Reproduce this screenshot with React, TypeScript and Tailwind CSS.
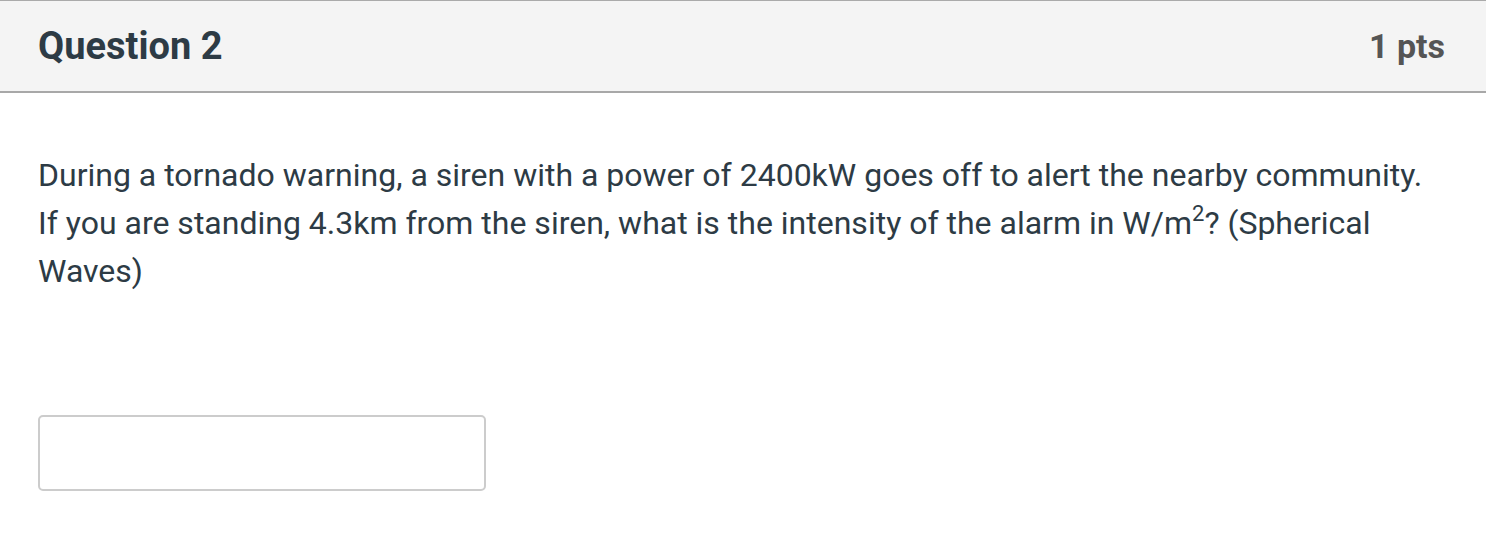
export default function App() {
  return (
    <div className="w-[1486px] h-[546px] bg-white font-['Roboto',sans-serif] overflow-hidden">
      <div className="flex items-center justify-between h-[93px] border-t border-[#aaaaaa] border-b-2 border-b-[#a8a8a8] bg-[#f4f4f4] pl-[38px] pr-[41px]">
        <h2 className="text-[38px] font-bold text-[#2d3b45] leading-none">Question 2</h2>
        <div className="text-[34px] font-bold text-[#555555] leading-none">1 pts</div>
      </div>
      <div className="px-[38px] pt-[58px]">
        <p className="text-[32px] leading-[48px] text-[#2d3b45] whitespace-nowrap">
          During a tornado warning, a siren with a power of 2400kW goes off to alert the nearby community.
          <br />
          If you are standing 4.3km from the siren, what is the intensity of the alarm in W/m
          <sup className="text-[22px] relative -top-[13px] align-baseline">2</sup>? (Spherical
          <br />
          Waves)
        </p>
        <input
          type="text"
          className="mt-[120px] block w-[448px] h-[76px] rounded-[5px] border-2 border-[#cccccc] bg-white"
        />
      </div>
    </div>
  );
}
